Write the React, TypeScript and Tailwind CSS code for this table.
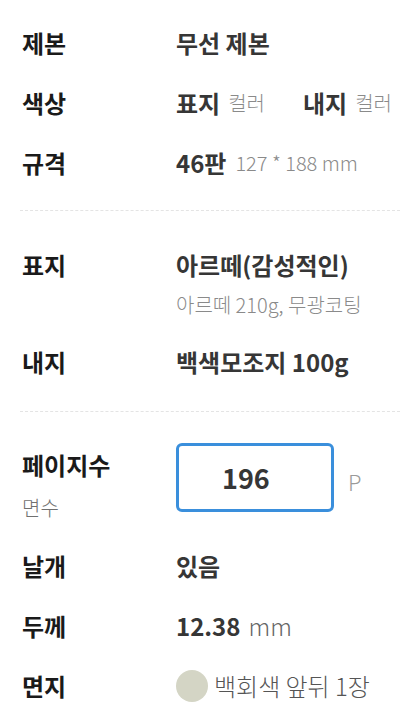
import React from 'react';

const font = "font-['Noto_Sans_CJK_KR','Noto_Sans',sans-serif]";

function Label({ children }: { children: React.ReactNode }) {
  return <div className="w-[154px] shrink-0 text-[24px] leading-[30px] font-bold text-[#1a1a1a]">{children}</div>;
}

function Row({ label, children }: { label: string; children: React.ReactNode }) {
  return (
    <div className="flex h-[60px] items-center">
      <Label>{label}</Label>
      <div className="flex items-center">{children}</div>
    </div>
  );
}

const strong = 'text-[24px] leading-[30px] font-bold text-[#363636]';
const muted = 'text-[20px] leading-[30px] font-light text-[#8a8a8a]';

export default function App() {
  return (
    <div className={`w-[400px] h-[728px] overflow-hidden bg-white pl-[22px] ${font}`}>
      {/* 제본 / 색상 / 규격 */}
      <div className="pt-[13px]">
        <Row label="제본">
          <span className={strong}>무선 제본</span>
        </Row>
        <Row label="색상">
          <span className={strong}>표지</span>
          <span className={`${muted} ml-[8px]`}>컬러</span>
          <span className={`${strong} ml-[38px]`}>내지</span>
          <span className={`${muted} ml-[8px]`}>컬러</span>
        </Row>
        <Row label="규격">
          <span className={strong}>46판</span>
          <span className={`${muted} ml-[9px]`}>127 * 188 mm</span>
        </Row>
      </div>

      <div className="mt-[17px] -ml-[2px] border-t border-dashed border-[#e4e4e4]" />

      {/* 표지 / 내지 */}
      <div className="pt-[39px]">
        <div className="flex items-start">
          <Label>표지</Label>
          <div className="flex flex-col">
            <span className={strong}>아르떼(감성적인)</span>
            <span className={`${muted} mt-[10px]`}>아르떼 210g, 무광코팅</span>
          </div>
        </div>
        <div className="flex items-start mt-[27px]">
          <Label>내지</Label>
          <span className={strong}>백색모조지 100g</span>
        </div>
      </div>

      <div className="mt-[34px] -ml-[2px] border-t border-dashed border-[#e4e4e4]" />

      {/* 페이지수 ~ 면지 */}
      <div className="pt-[31px]">
        <div className="flex items-start">
          <div className="w-[154px] shrink-0 pt-[7px]">
            <div className="text-[24px] leading-[30px] font-bold text-[#1a1a1a]">페이지수</div>
            <div className={`${muted} mt-[13px] text-[#707070]`}>면수</div>
          </div>
          <div className="w-[158px] h-[69px] rounded-[6px] border-[3px] border-[#3a8fdc] flex items-center pl-[43px]">
            <span className="text-[27px] leading-none font-bold text-[#363636]">196</span>
          </div>
          <span className="ml-[14px] mt-[23px] text-[22px] leading-[30px] font-light text-[#9a9a9a]">P</span>
        </div>

        <div className="mt-[13px]">
          <Row label="날개">
            <span className={strong}>있음</span>
          </Row>
          <Row label="두께">
            <span className={strong}>12.38</span>
            <span className="ml-[8px] text-[24px] leading-[30px] font-light text-[#666]">mm</span>
          </Row>
          <Row label="면지">
            <span className="w-[32px] h-[32px] rounded-full bg-[#d4d5c5]" />
            <span className="ml-[6px] text-[24px] leading-[30px] font-light text-[#555]">백회색 앞뒤 1장</span>
          </Row>
        </div>
      </div>
    </div>
  );
}
